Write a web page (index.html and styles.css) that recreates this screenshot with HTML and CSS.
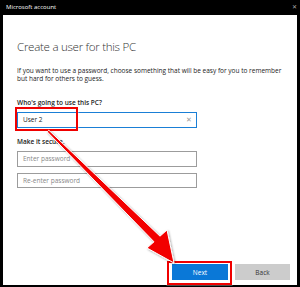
FILE: index.html
```html
<!DOCTYPE html>
<html lang="en">
<head>
<meta charset="utf-8">
<title>Microsoft account</title>
<link rel="stylesheet" href="styles.css">
</head>
<body>
<div class="window">
  <div class="titlebar">
    <span class="title">Microsoft account</span>
    <span class="close">✕</span>
  </div>
  <div class="content">
    <h1 class="heading">Create a user for this PC</h1>
    <p class="intro">If you want to use a password, choose something that will be easy for you to remember but hard for others to guess.</p>
    <div class="label">Who's going to use this PC?</div>
    <div class="field active"><span class="value">User 2</span><span class="clear">✕</span></div>
    <div class="label second">Make it secure.</div>
    <div class="field"><span class="placeholder">Enter password</span></div>
    <div class="field third"><span class="placeholder">Re-enter password</span></div>
    <div class="buttons">
      <div class="btn primary">Next</div>
      <div class="btn secondary">Back</div>
    </div>
  </div>
  <div class="mark mark-user"></div>
  <div class="mark mark-next"></div>
  <svg class="arrow" width="300" height="287" viewBox="0 0 300 287">
    <defs>
      <filter id="sh" x="-20%" y="-20%" width="140%" height="140%">
        <feDropShadow dx="1" dy="1" stdDeviation="1" flood-color="#000" flood-opacity="0.35"/>
      </filter>
    </defs>
    <polygon points="48.8,130.2 160,236.2 167,230 174,263 147,248 154,241.8 47.2,131.8" fill="#f20000" stroke="#ffffff" stroke-width="1" stroke-linejoin="miter" filter="url(#sh)"/>
  </svg>
</div>
</body>
</html>
```
FILE: styles.css
```css
html, body {
  margin: 0;
  padding: 0;
}
body {
  background: #000;
  font-family: "Open Sans", "Segoe UI", sans-serif;
}
.window {
  position: relative;
  width: 300px;
  height: 287px;
  display: flex;
  flex-direction: column;
  background: #000;
}
.titlebar {
  height: 15px;
  display: flex;
  align-items: center;
  justify-content: space-between;
  padding: 0 3px 0 6px;
  color: #fff;
  font-size: 6px;
}
.title {
  line-height: 15px;
}
.close {
  color: #aaa;
  font-size: 6px;
  margin-top: -1px;
}
.content {
  flex: 1;
  background: #fff;
  margin: 0 3px 2px 3px;
  padding: 0 7px 5px 14px;
  display: flex;
  flex-direction: column;
  color: #222;
}
.heading {
  margin: 23px 0 0 0;
  font-family: "Open Sans", sans-serif;
  font-size: 11.6px;
  font-weight: 300;
  letter-spacing: -0.3px;
  line-height: 17px;
  color: #333;
}
.intro {
  width: 268px;
  margin: 11.5px 0 0 0;
  font-size: 6.5px;
  line-height: 8.8px;
  color: #222;
}
.label {
  margin-top: 14px;
  font-size: 6.5px;
  font-weight: 600;
  line-height: 9px;
  color: #222;
}
.label.second {
  margin-top: 9.5px;
}
.field {
  width: 180px;
  height: 16px;
  box-sizing: border-box;
  border: 1px solid #9c9c9c;
  margin-top: 4.5px;
  display: flex;
  align-items: center;
  justify-content: space-between;
  padding: 0 4px 0 5px;
  font-size: 6.5px;
}
.field.active {
  border-color: #1a7fd6;
}
.field.third {
  margin-top: 6px;
  height: 15px;
}
.value {
  color: #222;
}
.clear {
  color: #999;
  font-size: 7px;
}
.placeholder {
  color: #888;
}
.buttons {
  margin-top: auto;
  display: flex;
  justify-content: flex-end;
  gap: 7px;
}
.btn {
  height: 16px;
  display: flex;
  align-items: center;
  justify-content: center;
  font-size: 6.5px;
}
.btn.primary {
  width: 56px;
  background: #0a78d7;
  color: #fff;
}
.btn.secondary {
  width: 55px;
  background: #cccccc;
  color: #333;
}
.mark {
  position: absolute;
  box-sizing: border-box;
  border: 2px solid #f00000;
  box-shadow: 0 0 0 0.5px rgba(255,255,255,0.6);
}
.mark-user {
  left: 15px;
  top: 107px;
  width: 63px;
  height: 24px;
}
.mark-next {
  left: 167px;
  top: 261px;
  width: 65px;
  height: 24px;
}
.arrow {
  position: absolute;
  left: 0;
  top: 0;
  pointer-events: none;
}
```
